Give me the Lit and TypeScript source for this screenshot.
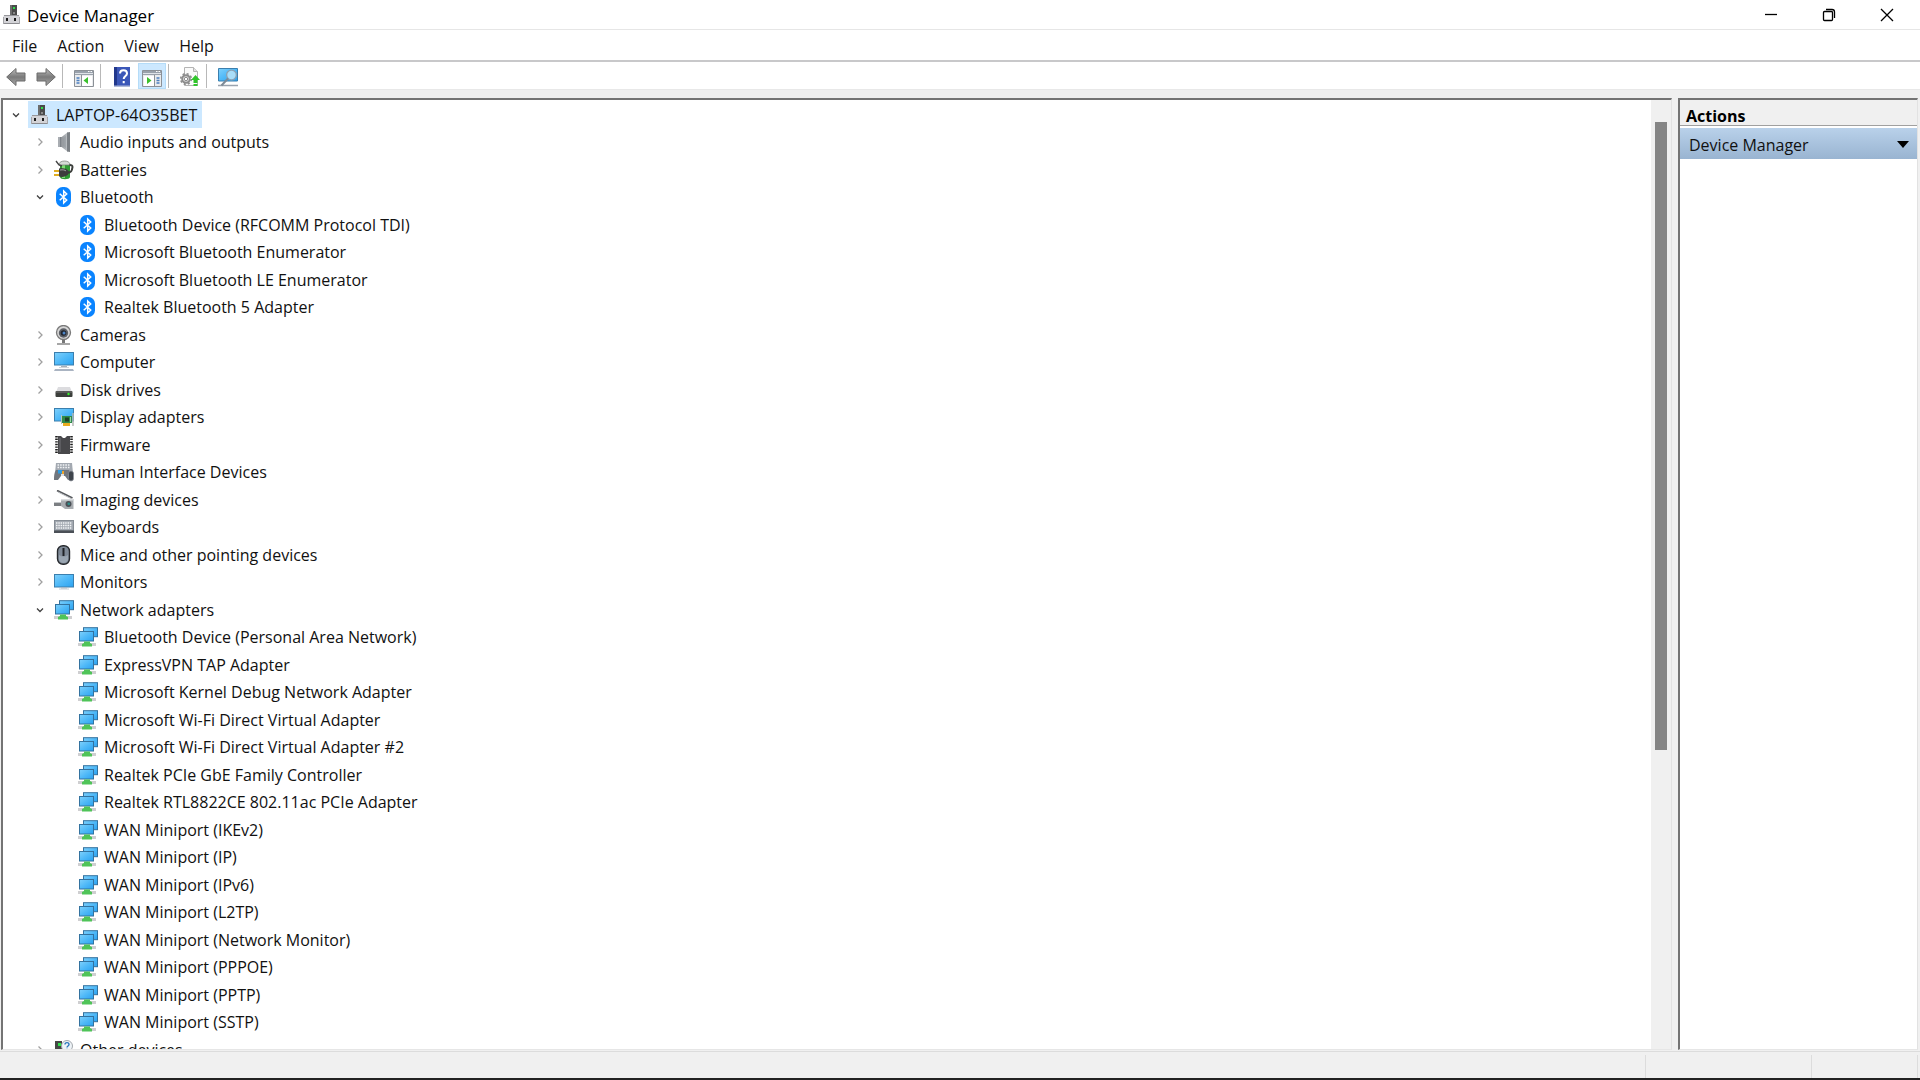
import { LitElement, html, css, nothing } from "lit";
import { customElement, state } from "lit/decorators.js";
import { classMap } from "lit/directives/class-map.js";

const ICON = {
  pc: html`<svg class="icon" viewBox="0 0 20 20" aria-hidden="true">
    <path d="M8 0h7v10H8z" fill="#4a4a4a" /><path d="M8 0h2v10H8z" fill="#6d6d6d" />
    <rect x="11" y="2" width="2" height="2" fill="#2fe04a" />
    <path d="M11 7h2v2h-2z" fill="#888" />
    <path d="M2 10h15l1 3v6H1v-6z" fill="#d3d3d7" /><path d="M2 10h15v1H2z" fill="#98989c" />
    <path d="M1 18h17v1H1z" fill="#8c8c90" /><path d="M1 12h1v7H1zM17 12h1v7h-1z" fill="#a5a5a9" />
    <rect x="4" y="13" width="2" height="3" fill="#1c1c1c" /><rect x="12" y="13" width="2" height="3" fill="#1c1c1c" />
  </svg>`,
  audio: html`<svg class="icon" viewBox="0 0 20 20" aria-hidden="true">
    <path d="M4 5h5v10H4z" fill="#7d8288" /><path d="M4 5h2v10H4z" fill="#a9adb2" />
    <path d="M7 5.500L14 0v20l-7-5.500z" fill="url(#g-metal)" /><path d="M13 .500L16 0v20l-3-.5z" fill="#7b8085" />
    <path d="M9 6.500l3-3v13l-3-3z" fill="#8e9399" opacity=".5" />
  </svg>`,
  battery: html`<svg class="icon" viewBox="0 0 20 20" aria-hidden="true">
    <path d="M6 4v13c0 3 10 3 10 0V4z" fill="#2f9a33" /><path d="M8 5h3v13H8z" fill="#7fdc74" />
    <path d="M5 4c1-4 10-4 11 0v1H5z" fill="#d5dbd5" stroke="#737a73" stroke-width=".7" />
    <path d="M2 1l3 4 3 1" fill="none" stroke="#444" stroke-width="1.4" />
    <path d="M12 13c6 0 6-3 6.500-6 0-2-1-2-3-2" fill="none" stroke="#3c3f3c" stroke-width="2" />
    <path d="M0 11h5M0 15h5" stroke="#e0ad22" stroke-width="1.800" />
    <path d="M5 8.500c5-1 8 0 10 3l-1 3c-2 2-5 3-9 2z" fill="#3d3d3d" /><path d="M6 10c3-.5 5 0 6 1" stroke="#a5a5a5" fill="none" />
  </svg>`,
  bluetooth: html`<svg class="icon" viewBox="0 0 20 20" aria-hidden="true">
    <rect x="2" y="0" width="15" height="20" rx="6.500" fill="#0a84ff" />
    <path d="M5.700 6.700l7 6.300-3 3V4l3 3-7 6.300" fill="none" stroke="#fff" stroke-width="1.500" />
  </svg>`,
  camera: html`<svg class="icon" viewBox="0 0 20 20" aria-hidden="true">
    <path d="M8 14h3v4H8z" fill="#777" /><path d="M3 19h13" stroke="#8a8a8a" stroke-width="1.500" />
    <circle cx="9.500" cy="7.500" r="7" fill="#d6d6d6" stroke="#7a7a7a" stroke-width="1.300" />
    <circle cx="9.500" cy="8" r="4.700" fill="#5c5f66" /><circle cx="9.500" cy="8" r="2.800" fill="#20242c" />
    <circle cx="10" cy="8" r="1.500" fill="#4f87c7" />
  </svg>`,
  computer: html`<svg class="icon" viewBox="0 0 20 20" aria-hidden="true">
    <rect x=".5" y=".5" width="19" height="12.500" fill="url(#g-screen)" stroke="#3b7fae" />
    <path d="M7 14h6v1H7z" fill="#a8b0b8" /><path d="M5 15h10v1H5z" fill="#d0d5da" />
    <path d="M1 17h18l1 2H0z" fill="#aab4c2" />
  </svg>`,
  disk: html`<svg class="icon" viewBox="0 0 20 20" aria-hidden="true">
    <path d="M4 7h12l2 5H2z" fill="#dcdcdf" /><rect x="1.500" y="11" width="17" height="6" rx="1" fill="#3c3f3c" />
    <path d="M2 12h16" stroke="#777" /><circle cx="14.500" cy="14" r="1.200" fill="#36f02c" />
  </svg>`,
  display: html`<svg class="icon" viewBox="0 0 20 20" aria-hidden="true">
    <rect x=".5" y="1.500" width="19" height="12.500" fill="url(#g-screen)" stroke="#3b7fae" />
    <path d="M8 9h10v7H8z" fill="#2f8a4a" /><path d="M7.500 8v9" fill="none" stroke="#b9c6bc" />
    <rect x="11" y="10.500" width="4" height="4" fill="#1d3f27" /><path d="M16 10h1v5h-1z" fill="#9bd3a5" />
    <path d="M9 16h7v3H9z" fill="#e8ab1f" /><path d="M19 6v13" stroke="#b5b9b5" stroke-width="1.500" />
  </svg>`,
  firmware: html`<svg class="icon" viewBox="0 0 20 20" aria-hidden="true">
    <path d="M4 1h3l2 2h2l2-2h3v18H4z" fill="#48484b" /><path d="M5 3h2v14H5z" fill="#5c5c60" />
    <path d="M2.500 1v18M17.500 1v18" stroke="#1f1f1f" stroke-width="2.600" stroke-dasharray="1.400 1.200" />
  </svg>`,
  hid: html`<svg class="icon" viewBox="0 0 20 20" aria-hidden="true">
    <path d="M2 1h16l1 10H1z" fill="#a3a9b1" /><path d="M3.500 3h13M3.500 5.500h13" stroke="#f2f4f6" stroke-width="1.500" stroke-dasharray="1.600 1" />
    <path d="M2 8h13c2 3 3 7 2 10h-3l-3-4H7l-3 4H0C0 14 0 11 2 8z" fill="#70767e" />
    <rect x="4" y="8" width="4" height="3.500" fill="#2f9be0" /><path d="M8 9h2v3H8z" fill="#f0a52a" />
    <path d="M7 12h3v2H7z" fill="#dcdfe3" /><rect x="14.500" y="9" width="5" height="10" rx="2.500" fill="#3e444c" stroke="#8e949c" stroke-width=".7" />
  </svg>`,
  imaging: html`<svg class="icon" viewBox="0 0 20 20" aria-hidden="true">
    <path d="M3 .5L18.500 8" stroke="#55585c" stroke-width="1.800" /><path d="M4 2l13 6.500" stroke="#b9bcc0" />
    <path d="M0 13h8v3H0z" fill="#7b7e82" /><path d="M0 12.500h8" stroke="#c5c8cb" />
    <path d="M7 9h12.500v10H11l-4-3z" fill="#a9adb1" /><path d="M7 9h12.500v1.500H7z" fill="#d9dcdf" />
    <circle cx="14.500" cy="14" r="3" fill="#4b4f55" /><circle cx="14.800" cy="13.800" r="1.400" fill="#2f8f8c" />
  </svg>`,
  keyboard: html`<svg class="icon" viewBox="0 0 20 20" aria-hidden="true">
    <rect x="0" y="3" width="20" height="13" fill="#868d95" /><rect x="1" y="4" width="18" height="9" fill="#a3a9b1" />
    <path d="M2 6h16M2 8.500h16M2 11h16" stroke="#f4f6f8" stroke-width="1.400" stroke-dasharray="1.500 .8" />
    <path d="M0 13.500h20V16H0z" fill="#4b5057" />
  </svg>`,
  mouse: html`<svg class="icon" viewBox="0 0 20 20" aria-hidden="true">
    <rect x="3.500" y=".7" width="12" height="18.600" rx="5.500" fill="#7e8996" stroke="#26292d" stroke-width="1.400" />
    <path d="M5 10c3 2 6 2 9 0v5c-2 4-7 4-9 0z" fill="#a7b2be" opacity=".7" />
    <rect x="8.500" y="3" width="2" height="8" fill="#1f2226" />
  </svg>`,
  monitor: html`<svg class="icon" viewBox="0 0 20 20" aria-hidden="true">
    <rect x=".5" y="2.500" width="19" height="12.500" fill="url(#g-screen)" stroke="#3b7fae" />
    <path d="M7 15.500h6v1H7z" fill="#a8b0b8" /><path d="M5 16.500h10v1H5z" fill="#c4cad0" />
  </svg>`,
  network: html`<svg class="icon" viewBox="0 0 20 20" aria-hidden="true">
    <rect x="5.500" y=".7" width="14" height="9" fill="url(#g-screen)" stroke="#33729f" />
    <rect x="1.500" y="4.500" width="14" height="9.500" fill="url(#g-screen)" stroke="#33729f" />
    <path d="M0 16h18v3H0z" fill="#cfcfd1" /><path d="M6 14.500h6V16l2 1v2.500H4V17l2-1z" fill="#4fc458" />
  </svg>`,
  other: html`<svg class="icon" viewBox="0 0 20 20" aria-hidden="true">
    <path d="M1 1h7v9H1z" fill="#454745" /><rect x="4" y="3" width="3" height="3" fill="#2fe04a" />
    <circle cx="13" cy="6" r="5.500" fill="#eef3f7" stroke="#a3a8ad" />
    <path d="M11 4.500c0-2.500 4-2.500 4 0 0 1.500-2 1.500-2 3M13 8.700v1.300" fill="none" stroke="#2c77bd" stroke-width="1.400" />
    <path d="M1 10h16v9H1z" fill="#c9c9cd" />
  </svg>`,
};

type IconName = keyof typeof ICON;
interface Category {
  name: string;
  icon: IconName;
  devices: string[];
}

const COMPUTER_NAME = "LAPTOP-64O35BET";
const CATEGORIES: Category[] = [
  { name: "Audio inputs and outputs", icon: "audio", devices: [] },
  { name: "Batteries", icon: "battery", devices: [] },
  {
    name: "Bluetooth",
    icon: "bluetooth",
    devices: [
      "Bluetooth Device (RFCOMM Protocol TDI)",
      "Microsoft Bluetooth Enumerator",
      "Microsoft Bluetooth LE Enumerator",
      "Realtek Bluetooth 5 Adapter",
    ],
  },
  { name: "Cameras", icon: "camera", devices: [] },
  { name: "Computer", icon: "computer", devices: [] },
  { name: "Disk drives", icon: "disk", devices: [] },
  { name: "Display adapters", icon: "display", devices: [] },
  { name: "Firmware", icon: "firmware", devices: [] },
  { name: "Human Interface Devices", icon: "hid", devices: [] },
  { name: "Imaging devices", icon: "imaging", devices: [] },
  { name: "Keyboards", icon: "keyboard", devices: [] },
  { name: "Mice and other pointing devices", icon: "mouse", devices: [] },
  { name: "Monitors", icon: "monitor", devices: [] },
  {
    name: "Network adapters",
    icon: "network",
    devices: [
      "Bluetooth Device (Personal Area Network)",
      "ExpressVPN TAP Adapter",
      "Microsoft Kernel Debug Network Adapter",
      "Microsoft Wi-Fi Direct Virtual Adapter",
      "Microsoft Wi-Fi Direct Virtual Adapter #2",
      "Realtek PCIe GbE Family Controller",
      "Realtek RTL8822CE 802.11ac PCIe Adapter",
      "WAN Miniport (IKEv2)",
      "WAN Miniport (IP)",
      "WAN Miniport (IPv6)",
      "WAN Miniport (L2TP)",
      "WAN Miniport (Network Monitor)",
      "WAN Miniport (PPPOE)",
      "WAN Miniport (PPTP)",
      "WAN Miniport (SSTP)",
    ],
  },
  { name: "Other devices", icon: "other", devices: [] },
];

const baseStyles = css`
  * {
    box-sizing: border-box;
  }
  button {
    font: inherit;
    color: inherit;
    background: none;
    border: 0;
    padding: 0;
    display: flex;
    align-items: center;
    justify-content: center;
  }
  .icon {
    width: 20px;
    height: 20px;
    flex: none;
    display: block;
  }
`;

@customElement("app-root")
export class AppRoot extends LitElement {
  @state() private rootOpen = true;
  @state() private open = new Set<string>(["Bluetooth", "Network adapters"]);

  static styles = [
    baseStyles,
    css`
      :host {
        display: flex;
        flex-direction: column;
        height: 100vh;
        overflow: hidden;
        background: #f0f0f0;
        color: #111;
        font: 16px/24px "Open Sans", "Noto Sans", sans-serif;
      }
      .titlebar {
        display: flex;
        align-items: center;
        height: 30px;
        padding: 0 4px 0 2px;
        background: #fff;
        border-bottom: 1px solid #e6e6e6;
        color: #000;
      }
      .title {
        flex: 1;
        margin: 0;
        padding: 2px 0 0 5px;
        font-size: 17px;
        font-weight: 400;
      }
      .caption {
        width: 58px;
        height: 28px;
      }
      .glyph {
        width: 14px;
        height: 14px;
        fill: none;
        stroke: #000;
        stroke-width: 1.3;
      }
      .menubar {
        display: flex;
        height: 32px;
        padding: 2px 2px 0;
        background: #fff;
        border-bottom: 2px solid #c8c8ca;
      }
      .menu {
        padding: 0 10px;
      }
      .toolbar {
        display: flex;
        align-items: center;
        gap: 2px;
        height: 28px;
        padding: 1px 2px 0;
        background: #fff;
        border-bottom: 1px solid #e8e8e8;
      }
      .tool {
        width: 28px;
        height: 26px;
        padding-top: 1px;
      }
      .tool.active {
        background: #cce8ff;
        border: 1px solid #b5dcf8;
      }
      .separator {
        width: 1px;
        height: 24px;
        margin-right: 5px;
        background: #b8b8b8;
      }
      .content {
        flex: 1;
        min-height: 0;
        display: flex;
        gap: 6px;
        padding: 8px 2px 0 1px;
      }
      .pane {
        display: flex;
        background: #fff;
        border: 2px solid #747474;
        border-right: 1px solid #e2e2e2;
        border-bottom: 1px solid #e6e6e6;
      }
      .tree-pane {
        flex: 1;
        min-width: 0;
      }
      .tree {
        flex: 1;
        margin: 0;
        padding: 1px;
        overflow: hidden;
        list-style: none;
      }
      .row {
        display: flex;
        height: 27px;
        white-space: nowrap;
      }
      .row:nth-child(even) {
        height: 28px;
      }
      .level-2 {
        padding-left: 24px;
      }
      .level-3 {
        padding-left: 48px;
      }
      .toggle {
        width: 24px;
        height: 27px;
        flex: none;
      }
      .chevron {
        width: 10px;
        height: 10px;
        fill: none;
        stroke: #a0a0a0;
        stroke-width: 1.3;
      }
      .chevron.expanded {
        stroke: #404040;
      }
      .node {
        display: flex;
        align-items: center;
        gap: 6px;
        padding: 0 5px 0 2px;
      }
      .node.selected {
        background: #cce8ff;
      }
      .scrollbar {
        display: grid;
        grid-template-rows: 22px 629fr 299fr;
        width: 20px;
        padding: 0 4px;
        background: #f0f0f0;
      }
      .thumb {
        grid-row: 2;
        background: #858585;
      }
      .actions {
        flex-direction: column;
        width: 240px;
      }
      .heading {
        height: 26px;
        margin: 0;
        padding: 4px 6px 0;
        background: #f0f0f0;
        border-bottom: 1px solid #a0a0a0;
        font-size: 16px;
        line-height: 24px;
        font-weight: 700;
        color: #000;
      }
      .group {
        justify-content: space-between;
        height: 31px;
        margin-top: 2px;
        padding: 2px 8px 0 9px;
        background: linear-gradient(#b9d1ea, #99b4d1);
      }
      .arrow {
        width: 12px;
        height: 7px;
      }
      .statusbar {
        display: flex;
        justify-content: flex-end;
        height: 29px;
        margin-top: 1px;
        padding: 3px 2px 0 0;
        border-top: 1px solid #dcdcdc;
        border-bottom: 2px solid #222;
      }
      .cell {
        width: 106px;
        border-right: 1px solid #dcdcdc;
      }
      .cell.wide {
        width: 167px;
        border-left: 1px solid #dcdcdc;
      }
    `,
  ];

  private toggle(name: string) {
    const next = new Set(this.open);
    if (!next.delete(name)) next.add(name);
    this.open = next;
  }

  private chevron(name: string, expanded: boolean, onToggle: () => void) {
    return html`<button class="toggle" aria-label="Toggle ${name}" @click=${onToggle}>
      <svg class=${classMap({ chevron: true, expanded })} viewBox="0 0 10 10">
        <path d=${expanded ? "M2 3.500l3 3 3-3" : "M3.500 1.500L7 5 3.500 8.500"} />
      </svg>
    </button>`;
  }

  private row(
    level: number,
    name: string,
    icon: IconName,
    expanded?: boolean,
    onToggle?: () => void,
  ) {
    return html`<li
      class="row level-${level}"
      role="treeitem"
      aria-level=${level}
      aria-expanded=${expanded ?? nothing}
      aria-selected=${level === 1 ? "true" : "false"}
    >
      ${onToggle ? this.chevron(name, !!expanded, onToggle) : html`<span class="toggle"></span>`}
      <span class=${classMap({ node: true, selected: level === 1 })}>${ICON[icon]}<span>${name}</span></span>
    </li>`;
  }

  private rows() {
    return [
      this.row(1, COMPUTER_NAME, "pc", this.rootOpen, () => (this.rootOpen = !this.rootOpen)),
      ...(this.rootOpen ? CATEGORIES : []).flatMap((c) => {
        const expanded = this.open.has(c.name);
        return [
          this.row(2, c.name, c.icon, expanded, () => this.toggle(c.name)),
          ...(expanded ? c.devices.map((d) => this.row(3, d, c.icon)) : []),
        ];
      }),
    ];
  }

  render() {
    return html`
      <header class="titlebar">
        ${ICON.pc}
        <h1 class="title">Device Manager</h1>
        <button class="caption" aria-label="Minimize">
          <svg class="glyph" viewBox="0 0 14 14"><path d="M1 6.500h12" /></svg>
        </button>
        <button class="caption" aria-label="Restore">
          <svg class="glyph" viewBox="0 0 14 14">
            <rect x="1.500" y="3.500" width="9" height="9" rx="1" />
            <path d="M4 1.500h6a2.500 2.500 0 0 1 2.500 2.500v6" />
          </svg>
        </button>
        <button class="caption" aria-label="Close">
          <svg class="glyph" viewBox="0 0 14 14"><path d="M1 1l12 12M13 1L1 13" /></svg>
        </button>
      </header>
      <nav class="menubar" aria-label="Menu">
        ${["File", "Action", "View", "Help"].map((m) => html`<button class="menu">${m}</button>`)}
      </nav>
      <div class="toolbar" role="toolbar">
        <button class="tool" aria-label="Back">
          <svg class="icon" viewBox="0 0 20 20">
            <defs>
              <linearGradient id="g-screen" x1="0" y1="0" x2="1" y2="1">
                <stop offset="0" stop-color="#7fd0fb" />
                <stop offset=".5" stop-color="#4fb9f8" />
                <stop offset="1" stop-color="#2ba2f0" />
              </linearGradient>
              <linearGradient id="g-metal">
                <stop offset="0" stop-color="#8d9196" />
                <stop offset="1" stop-color="#c3c7cb" />
              </linearGradient>
              <linearGradient id="g-arrow" x1="0" y1="0" x2="0" y2="1">
                <stop offset="0" stop-color="#c0c0c0" />
                <stop offset=".5" stop-color="#7a7a7a" />
                <stop offset="1" stop-color="#aaa" />
              </linearGradient>
            </defs>
            <path d="M.7 10L10 1.500V6h9v8h-9v4.500z" fill="url(#g-arrow)" stroke="#6b6b6b" stroke-linejoin="round" />
          </svg>
        </button>
        <button class="tool" aria-label="Forward">
          <svg class="icon" viewBox="0 0 20 20">
            <path d="M19.300 10L10 1.500V6H1v8h9v4.500z" fill="url(#g-arrow)" stroke="#6b6b6b" stroke-linejoin="round" />
          </svg>
        </button>
        <span class="separator"></span>
        <button class="tool" aria-label="Show/Hide Console Tree">
          <svg class="icon" viewBox="0 0 20 20">
            <path d="M.5 3.500h19v16H.5z" fill="#e9ebed" stroke="#8b9096" /><path d="M1 4h18v4H1z" fill="#99a1ab" />
            <path d="M1 6.500h18" stroke="#dfe3e8" /><path d="M14 4.500h1.500M16.500 4.500H18" stroke="#fff" />
            <path d="M8 9h10v10H8z" fill="#fff" /><path d="M7.500 8v11" stroke="#8b9096" />
            <path d="M2.500 11h3M2.500 13.500h3M2.500 16h3" stroke="#4b7fc0" stroke-width="1.300" />
            <path d="M14 10v7l-4.500-3.500z" fill="#3bc02c" />
          </svg>
        </button>
        <span class="separator"></span>
        <button class="tool" aria-label="Help">
          <svg class="icon" viewBox="0 0 20 20">
            <path d="M2 0h16v19H2z" fill="#3b57b8" /><path d="M2 0h3v19H2z" fill="#22388c" /><path d="M2 18.500h16V20H2z" fill="#aeb9d8" />
            <path d="M8 6.500c0-4.500 7-4.500 7 0 0 2.500-3.300 2.500-3.300 5.500M11.700 14v2.200" fill="none" stroke="#fff" stroke-width="2" />
          </svg>
        </button>
        <button class="tool active" aria-label="Show/Hide Action Pane" aria-pressed="true">
          <svg class="icon" viewBox="0 0 20 20">
            <path d="M.5 3.500h19v16H.5z" fill="#e9ebed" stroke="#8b9096" /><path d="M1 4h18v4H1z" fill="#99a1ab" />
            <path d="M1 6.500h18" stroke="#dfe3e8" /><path d="M14 4.500h1.500M16.500 4.500H18" stroke="#fff" />
            <path d="M2 9h10v10H2z" fill="#fff" /><path d="M12.500 8v11" stroke="#8b9096" />
            <path d="M14.500 11h3M14.500 13.500h3M14.500 16h3" stroke="#4b7fc0" stroke-width="1.300" />
            <path d="M5 10v7l4.500-3.500z" fill="#3bc02c" />
          </svg>
        </button>
        <span class="separator"></span>
        <button class="tool" aria-label="Update driver">
          <svg class="icon" viewBox="0 0 20 20">
            <path d="M4.500.5h9l4 4v14h-13z" fill="#fafafa" stroke="#b4b4b4" /><path d="M13.500.5v4h4" fill="#e2e2e2" stroke="#b4b4b4" />
            <circle cx="6" cy="12" r="3.800" fill="#e6e6e6" stroke="#8c8c8c" stroke-width="2" />
            <circle cx="6" cy="12" r="5.300" fill="none" stroke="#8c8c8c" stroke-width="1.600" stroke-dasharray="2.100 2.060" />
            <circle cx="6" cy="12" r="1.700" fill="#fff" stroke="#8c8c8c" />
            <path d="M15.500 8l4.500 5h-2.500v3h-4v-3H11zM13.500 17h4v2h-4z" fill="#2fc52a" />
          </svg>
        </button>
        <span class="separator"></span>
        <button class="tool" aria-label="Scan for hardware changes">
          <svg class="icon" viewBox="0 0 20 20">
            <path d="M.5 1.500h19v12.500H.5z" fill="url(#g-screen)" stroke="#3b7fae" /><path d="M0 18.500h20" stroke="#9aa3ad" stroke-width="1.500" />
            <circle cx="13.500" cy="8" r="4.900" fill="#a9ddf8" stroke="#8aa2b5" stroke-width="1.400" />
            <path d="M10 11.500L3.500 18.500" stroke="#7d8a96" stroke-width="2" />
          </svg>
        </button>
      </div>
      <main class="content">
        <section class="pane tree-pane">
          <ul class="tree" role="tree" aria-label="Devices">
            ${this.rows()}
          </ul>
          <div class="scrollbar" aria-hidden="true"><div class="thumb"></div></div>
        </section>
        <aside class="pane actions">
          <h2 class="heading">Actions</h2>
          <button class="group">
            <span>Device Manager</span>
            <svg class="arrow" viewBox="0 0 12 7"><path d="M0 0h12L6 7z" fill="#000" /></svg>
          </button>
        </aside>
      </main>
      <footer class="statusbar">
        <span class="cell wide"></span>
        <span class="cell"></span>
      </footer>
    `;
  }
}
